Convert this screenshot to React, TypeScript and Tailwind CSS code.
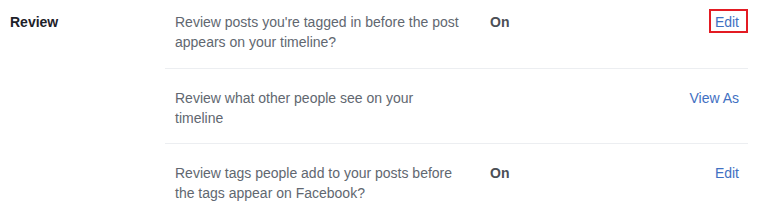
const rows = [
  {
    id: "posts",
    text: "Review posts you're tagged in before the post appears on your timeline?",
    status: "On",
    action: "Edit",
    highlight: true,
  },
  {
    id: "view-as",
    text: "Review what other people see on your timeline",
    status: "",
    action: "View As",
    highlight: false,
  },
  {
    id: "tags",
    text: "Review tags people add to your posts before the tags appear on Facebook?",
    status: "On",
    action: "Edit",
    highlight: false,
  },
];

export default function App() {
  return (
    <div className="w-[768px] h-[209px] overflow-hidden bg-white font-['Liberation_Sans',Arial,sans-serif] text-[14px] leading-[20px]">
      <div className="flex">
        {/* Section label */}
        <div className="w-[165px] shrink-0 pl-[10px] pt-[12px] font-bold text-[#1d2129]">
          Review
        </div>

        {/* Settings rows */}
        <div className="w-[583px] flex flex-col">
          {rows.map((row, i) => (
            <div
              key={row.id}
              className={`flex items-start pl-[10px] pr-[9px] border-b border-[#eceef1] ${
                i === 0 ? "pt-[12px] pb-[16px]" : "pt-[19px] pb-[15px]"
              }`}
            >
              <div className="w-[288px] shrink-0 text-[#616770]">{row.text}</div>
              {row.status && (
                <div className="ml-[27px] font-bold text-[#4b4f56]">{row.status}</div>
              )}
              <a href="#" className="relative ml-auto text-[#3f70c2]">
                {row.action}
                {row.highlight && (
                  <span className="absolute -left-[6px] -right-[9px] -top-[3px] -bottom-[1px] border-2 border-[#e31b23]" />
                )}
              </a>
            </div>
          ))}
        </div>
      </div>
    </div>
  );
}
